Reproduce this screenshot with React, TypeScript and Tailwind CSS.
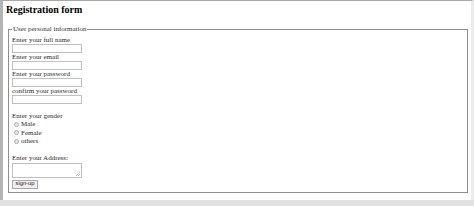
const LABEL = "block h-[8px] text-[7px] leading-[8px]";
const INPUT = "block h-[9px] w-[70px] border border-[#c0c0c0] bg-white";

const GENDERS = ["Male", "Female", "others"];

export default function App() {
  return (
    <div className="w-[474px] h-[206px] bg-[#e2e2e2] font-['Liberation_Serif','Times_New_Roman',serif] text-[#2a2a2a]">
      <div className="h-[200px] bg-white border-t border-l-[3px] border-r-[3px] border-t-[#a8a8a8] border-l-[#b4b4b4] border-r-[#ececec] pl-[3px]">
        <h2 className="mt-[3px] text-[10px] leading-[12px] font-bold text-black">Registration form</h2>
        <fieldset className="mt-[9px] ml-[2px] w-[460px] border border-[#8f8f8f] pl-[3px] pb-[3px]">
          <legend className="px-[1px] text-[7px] leading-[8px] text-[#333]">User personal information</legend>
          <div className="mt-[3px]">
            <span className={LABEL}>Enter your full name</span>
            <span className={INPUT} />
            <span className={LABEL}>Enter your email</span>
            <span className={INPUT} />
            <span className={LABEL}>Enter your password</span>
            <span className={INPUT} />
            <span className={LABEL}>confirm your password</span>
            <span className={INPUT} />
            <div className="h-[8px]" />
            <span className={LABEL}>Enter your gender</span>
            {GENDERS.map((g) => (
              <div key={g} className="flex items-center h-[8.5px] text-[7px] leading-[8px]">
                <span className="ml-[2px] mr-[2px] w-[5px] h-[5px] rounded-full border border-[#b0b0b0] bg-[#e6e6e6]" />
                {g}
              </div>
            ))}
            <div className="h-[8px]" />
            <span className={LABEL}>Enter your Address:</span>
            <div className="relative mt-[1px] h-[15px] w-[70px] border border-[#c0c0c0] bg-white">
              <svg className="absolute right-[1px] bottom-[1px]" width="4" height="4" viewBox="0 0 4 4">
                <path d="M0 4L4 0M2 4L4 2" stroke="#999" strokeWidth="0.6" />
              </svg>
            </div>
            <button
              type="button"
              className="mt-[2px] flex items-center justify-center h-[9px] w-[26px] border border-[#a8a8a8] bg-[#efefef] text-[5.8px] leading-none font-['Liberation_Sans',Arial,sans-serif] text-[#222]"
            >
              sign-up
            </button>
          </div>
        </fieldset>
      </div>
    </div>
  );
}
